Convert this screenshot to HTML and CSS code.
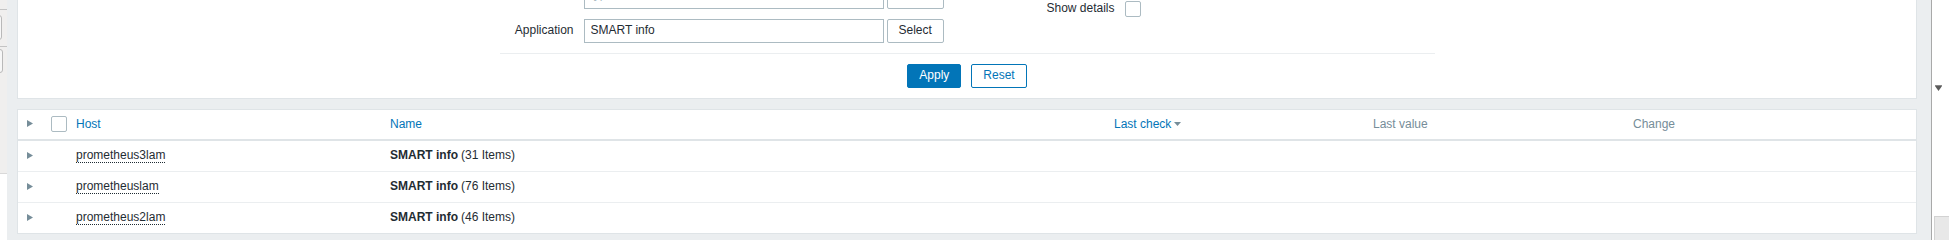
FILE: index.html
```html
<!DOCTYPE html>
<html lang="en">
<head>
<meta charset="utf-8">
<title>Latest data</title>
<link rel="stylesheet" href="styles.css">
</head>
<body>
<div class="page">
  <aside class="side-left">
    <div class="sl-top">
      <div class="sl-line"></div>
      <div class="sl-box"></div>
      <div class="sl-line sl-line2"></div>
      <div class="sl-box sl-box2"></div>
    </div>
  </aside>

  <main class="main">
    <section class="panel filter">
      <div class="filter-form">
        <div class="fcol fcol-left">
          <div class="frow frow-ms">
            <label class="flabel">Hosts</label>
            <div class="ffield"><input class="text" type="text" placeholder="type here to search"><button class="btn-alt" type="button">Select</button></div>
          </div>
          <div class="frow">
            <label class="flabel">Application</label>
            <div class="ffield"><input class="text" type="text" value="SMART info"><button class="btn-alt" type="button">Select</button></div>
          </div>
        </div>
        <div class="fcol fcol-right">
          <div class="frow">
            <label class="flabel">Show details</label>
            <div class="ffield"><span class="checkbox"></span></div>
          </div>
        </div>
      </div>
      <div class="filter-sep"></div>
      <div class="filter-buttons">
        <button class="btn" type="button">Apply</button>
        <button class="btn-outline" type="button">Reset</button>
      </div>
    </section>

    <section class="panel list">
      <div class="tr thead">
        <div class="cell"><svg class="toggle" width="6" height="7" viewBox="0 0 6 7"><polygon points="0,0 6,3.5 0,7" fill="#768d99"/></svg></div>
        <div class="cell"><span class="checkbox"></span></div>
        <div class="cell"><span class="link">Host</span></div>
        <div class="cell"><span class="link">Name</span></div>
        <div class="cell"><span class="link">Last check</span><svg class="sort" width="7" height="4" viewBox="0 0 7 4"><polygon points="0,0 7,0 3.5,4" fill="#768d99"/></svg></div>
        <div class="cell muted">Last value</div>
        <div class="cell muted">Change</div>
      </div>
      <div class="tr">
        <div class="cell"><svg class="toggle" width="6" height="7" viewBox="0 0 6 7"><polygon points="0,0 6,3.5 0,7" fill="#768d99"/></svg></div>
        <div class="cell"></div>
        <div class="cell"><span class="host">prometheus3lam</span></div>
        <div class="cell"><b>SMART info</b> (31 Items)</div>
        <div class="cell"></div><div class="cell"></div><div class="cell"></div>
      </div>
      <div class="tr">
        <div class="cell"><svg class="toggle" width="6" height="7" viewBox="0 0 6 7"><polygon points="0,0 6,3.5 0,7" fill="#768d99"/></svg></div>
        <div class="cell"></div>
        <div class="cell"><span class="host">prometheuslam</span></div>
        <div class="cell"><b>SMART info</b> (76 Items)</div>
        <div class="cell"></div><div class="cell"></div><div class="cell"></div>
      </div>
      <div class="tr">
        <div class="cell"><svg class="toggle" width="6" height="7" viewBox="0 0 6 7"><polygon points="0,0 6,3.5 0,7" fill="#768d99"/></svg></div>
        <div class="cell"></div>
        <div class="cell"><span class="host">prometheus2lam</span></div>
        <div class="cell"><b>SMART info</b> (46 Items)</div>
        <div class="cell"></div><div class="cell"></div><div class="cell"></div>
      </div>
    </section>
  </main>

  <aside class="side-right">
    <svg class="scroll-arrow" width="7" height="6" viewBox="0 0 7 6"><rect x="0" y="0" width="7" height="1" fill="#8a8a8a"/><polygon points="0,1 7,1 3.5,6" fill="#5a5a5a"/></svg>
    <div class="scroll-thumb"></div>
  </aside>
</div>
</body>
</html>
```

FILE: styles.css
```css
* {
  box-sizing: border-box;
}

html,
body {
  margin: 0;
  height: 100%;
}

body {
  font-family: "Liberation Sans", Arial, sans-serif;
  font-size: 12px;
  color: #1f2c33;
  background: #ffffff;
  overflow: hidden;
}

.page {
  display: flex;
  height: 240px;
}

/* left fragment */
.side-left {
  width: 7px;
  flex: none;
  background: #ffffff;
  overflow: hidden;
}

.sl-top {
  height: 174px;
  padding-top: 9px;
  background: #f0efee;
  border-bottom: 1px solid #d9d9d9;
}

.sl-line {
  height: 1px;
  background: #c4c4c4;
}

.sl-line2 {
  margin-top: 6px;
}

.sl-box {
  margin-top: 5px;
  margin-left: -10px;
  width: 12px;
  height: 25px;
  border: 1px solid #b9b9b9;
  border-radius: 3px;
  background: #f7f7f7;
}

.sl-box2 {
  margin-top: 2px;
  width: 13px;
  height: 24px;
}

/* main area */
.main {
  flex: 1;
  min-width: 0;
  background: #ebeef0;
  padding: 0 14px 0 10px;
}

.panel {
  background: #ffffff;
  border: 1px solid #dfe4e7;
}

.filter {
  margin-top: -30px;
  padding: 9px 0 10px;
}

.filter-form {
  display: flex;
  width: 935px;
  margin: 0 auto;
}

.fcol-left {
  width: 468px;
}

.fcol-right {
  flex: 1;
  padding-top: 17px;
}

.frow {
  display: flex;
  align-items: center;
  height: 34px;
}

.fcol-right .frow {
  height: 24px;
}

.flabel {
  flex: none;
  text-align: right;
  padding: 0 10px 2px 0;
}

/* multiselect row: label sits at the top, the inner text sits higher */
.frow-ms .flabel {
  align-self: flex-start;
  padding-top: 4px;
}

.frow-ms .text,
.frow-ms .btn-alt {
  padding-bottom: 7px;
}

.fcol-left .flabel {
  width: 84px;
}

.fcol-right .flabel {
  width: 157px;
}

.ffield {
  display: flex;
  align-items: center;
}

.text {
  width: 300px;
  height: 24px;
  margin: 0;
  padding: 0 6px 2px;
  border: 1px solid #acbbc2;
  border-radius: 0;
  background: #ffffff;
  color: #1f2c33;
  font: inherit;
  outline: none;
}

.text::placeholder {
  color: #acbbc2;
  opacity: 1;
}

.btn-alt {
  margin: 0 0 0 3px;
  height: 24px;
  padding: 0 11px 2px;
  border: 1px solid #acbbc2;
  border-radius: 2px;
  background: #ffffff;
  color: #1f2c33;
  font: inherit;
}

.checkbox {
  display: inline-block;
  width: 16px;
  height: 16px;
  border: 1px solid #acbbc2;
  border-radius: 2px;
  background: #ffffff;
  vertical-align: middle;
}

.filter-sep {
  width: 935px;
  margin: 5px auto 0;
  border-top: 1px solid #ebeef0;
}

.filter-buttons {
  display: flex;
  justify-content: center;
  gap: 10px;
  padding-top: 10px;
}

.btn,
.btn-outline {
  height: 24px;
  margin: 0;
  padding: 0 11px 2px;
  border: 1px solid #0275b8;
  border-radius: 2px;
  font: inherit;
}

.btn {
  background: #0275b8;
  color: #ffffff;
}

.btn-outline {
  background: #ffffff;
  color: #0275b8;
}

/* list table */
.list {
  margin-top: 10px;
}

.tr {
  display: grid;
  grid-template-columns: 33px 25px 314px 724px 259px 260px 1fr;
  align-items: center;
  height: 31px;
  border-bottom: 1px solid #ebeef0;
}

.tr:last-child {
  height: 30px;
  border-bottom: 0;
}

.thead {
  height: 31px;
  border-bottom: 2px solid #dfe4e7;
}

.cell {
  display: flex;
  align-items: center;
  white-space: nowrap;
  min-width: 0;
  padding-bottom: 2px;
}

.toggle {
  display: block;
  margin-left: 9px;
}

.link {
  color: #0275b8;
}

.sort {
  display: block;
  margin-left: 3px;
}

.muted {
  color: #768d99;
}

.host {
  color: #1f2c33;
  border-bottom: 1px dotted #1f2c33;
}

.cell b {
  font-weight: bold;
  margin-right: 3px;
}

/* right scrollbar fragment */
.side-right {
  width: 18px;
  flex: none;
  display: flex;
  flex-direction: column;
  border-left: 1px solid #a9a9a9;
  background: #ffffff;
}

.scroll-arrow {
  display: block;
  margin: 85px 0 0 3px;
}

.scroll-thumb {
  margin-top: auto;
  margin-left: 2px;
  height: 24px;
  background: #e8e8e8;
  border-top: 1px solid #d2d2d2;
  border-left: 1px solid #d2d2d2;
}
```
